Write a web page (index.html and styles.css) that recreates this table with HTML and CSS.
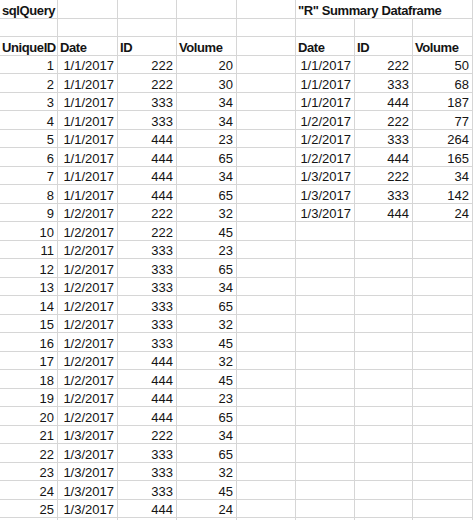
FILE: index.html
```html
<!DOCTYPE html>
<html>
<head>
<meta charset="utf-8">
<link rel="stylesheet" href="styles.css">
</head>
<body>
<div class="sheet">
<div class="c b">sqlQuery</div><div class="c"></div><div class="c"></div><div class="c"></div><div class="c"></div><div class="c b ov">"R" Summary Dataframe</div><div class="c hid"></div><div class="c"></div>
<div class="c"></div><div class="c"></div><div class="c"></div><div class="c"></div><div class="c"></div><div class="c"></div><div class="c"></div><div class="c"></div>
<div class="c b">UniqueID</div><div class="c b">Date</div><div class="c b">ID</div><div class="c b">Volume</div><div class="c"></div><div class="c b">Date</div><div class="c b">ID</div><div class="c b">Volume</div>
<div class="c n">1</div><div class="c n">1/1/2017</div><div class="c n">222</div><div class="c n">20</div><div class="c"></div><div class="c n">1/1/2017</div><div class="c n">222</div><div class="c n">50</div>
<div class="c n">2</div><div class="c n">1/1/2017</div><div class="c n">222</div><div class="c n">30</div><div class="c"></div><div class="c n">1/1/2017</div><div class="c n">333</div><div class="c n">68</div>
<div class="c n">3</div><div class="c n">1/1/2017</div><div class="c n">333</div><div class="c n">34</div><div class="c"></div><div class="c n">1/1/2017</div><div class="c n">444</div><div class="c n">187</div>
<div class="c n">4</div><div class="c n">1/1/2017</div><div class="c n">333</div><div class="c n">34</div><div class="c"></div><div class="c n">1/2/2017</div><div class="c n">222</div><div class="c n">77</div>
<div class="c n">5</div><div class="c n">1/1/2017</div><div class="c n">444</div><div class="c n">23</div><div class="c"></div><div class="c n">1/2/2017</div><div class="c n">333</div><div class="c n">264</div>
<div class="c n">6</div><div class="c n">1/1/2017</div><div class="c n">444</div><div class="c n">65</div><div class="c"></div><div class="c n">1/2/2017</div><div class="c n">444</div><div class="c n">165</div>
<div class="c n">7</div><div class="c n">1/1/2017</div><div class="c n">444</div><div class="c n">34</div><div class="c"></div><div class="c n">1/3/2017</div><div class="c n">222</div><div class="c n">34</div>
<div class="c n">8</div><div class="c n">1/1/2017</div><div class="c n">444</div><div class="c n">65</div><div class="c"></div><div class="c n">1/3/2017</div><div class="c n">333</div><div class="c n">142</div>
<div class="c n">9</div><div class="c n">1/2/2017</div><div class="c n">222</div><div class="c n">32</div><div class="c"></div><div class="c n">1/3/2017</div><div class="c n">444</div><div class="c n">24</div>
<div class="c n">10</div><div class="c n">1/2/2017</div><div class="c n">222</div><div class="c n">45</div><div class="c"></div><div class="c"></div><div class="c"></div><div class="c"></div>
<div class="c n">11</div><div class="c n">1/2/2017</div><div class="c n">333</div><div class="c n">23</div><div class="c"></div><div class="c"></div><div class="c"></div><div class="c"></div>
<div class="c n">12</div><div class="c n">1/2/2017</div><div class="c n">333</div><div class="c n">65</div><div class="c"></div><div class="c"></div><div class="c"></div><div class="c"></div>
<div class="c n">13</div><div class="c n">1/2/2017</div><div class="c n">333</div><div class="c n">34</div><div class="c"></div><div class="c"></div><div class="c"></div><div class="c"></div>
<div class="c n">14</div><div class="c n">1/2/2017</div><div class="c n">333</div><div class="c n">65</div><div class="c"></div><div class="c"></div><div class="c"></div><div class="c"></div>
<div class="c n">15</div><div class="c n">1/2/2017</div><div class="c n">333</div><div class="c n">32</div><div class="c"></div><div class="c"></div><div class="c"></div><div class="c"></div>
<div class="c n">16</div><div class="c n">1/2/2017</div><div class="c n">333</div><div class="c n">45</div><div class="c"></div><div class="c"></div><div class="c"></div><div class="c"></div>
<div class="c n">17</div><div class="c n">1/2/2017</div><div class="c n">444</div><div class="c n">32</div><div class="c"></div><div class="c"></div><div class="c"></div><div class="c"></div>
<div class="c n">18</div><div class="c n">1/2/2017</div><div class="c n">444</div><div class="c n">45</div><div class="c"></div><div class="c"></div><div class="c"></div><div class="c"></div>
<div class="c n">19</div><div class="c n">1/2/2017</div><div class="c n">444</div><div class="c n">23</div><div class="c"></div><div class="c"></div><div class="c"></div><div class="c"></div>
<div class="c n">20</div><div class="c n">1/2/2017</div><div class="c n">444</div><div class="c n">65</div><div class="c"></div><div class="c"></div><div class="c"></div><div class="c"></div>
<div class="c n">21</div><div class="c n">1/3/2017</div><div class="c n">222</div><div class="c n">34</div><div class="c"></div><div class="c"></div><div class="c"></div><div class="c"></div>
<div class="c n">22</div><div class="c n">1/3/2017</div><div class="c n">333</div><div class="c n">65</div><div class="c"></div><div class="c"></div><div class="c"></div><div class="c"></div>
<div class="c n">23</div><div class="c n">1/3/2017</div><div class="c n">333</div><div class="c n">32</div><div class="c"></div><div class="c"></div><div class="c"></div><div class="c"></div>
<div class="c n">24</div><div class="c n">1/3/2017</div><div class="c n">333</div><div class="c n">45</div><div class="c"></div><div class="c"></div><div class="c"></div><div class="c"></div>
<div class="c n">25</div><div class="c n">1/3/2017</div><div class="c n">444</div><div class="c n">24</div><div class="c"></div><div class="c"></div><div class="c"></div><div class="c"></div>
<div class="c"></div><div class="c"></div><div class="c"></div><div class="c"></div><div class="c"></div><div class="c"></div><div class="c"></div><div class="c"></div>
</div>
</body>
</html>
```
FILE: styles.css
```css
html, body {
  margin: 0;
  padding: 0;
  background: #ffffff;
}
body {
  width: 474px;
  height: 520px;
  overflow: hidden;
}
.sheet {
  display: grid;
  grid-template-columns: 58px 60px 59px 60px 59px 59px 58px 60px;
  grid-auto-rows: 18.5px;
  font-family: "Liberation Sans", Arial, sans-serif;
  font-size: 13px;
  color: #141414;
}
.c {
  box-sizing: border-box;
  border-right: 1px solid #d6d6d6;
  border-bottom: 1px solid #d6d6d6;
  display: flex;
  align-items: flex-end;
  line-height: 15px;
  padding: 0 3px 0 3px;
  white-space: nowrap;
  min-width: 0;
}
.n {
  justify-content: flex-end;
}
.b {
  font-weight: bold;
  letter-spacing: -0.4px;
  padding-left: 2px;
}
.ov {
  overflow: visible;
  border-right-color: transparent;
  position: relative;
  z-index: 1;
}
.hid {
  border-right-color: transparent;
}
```
